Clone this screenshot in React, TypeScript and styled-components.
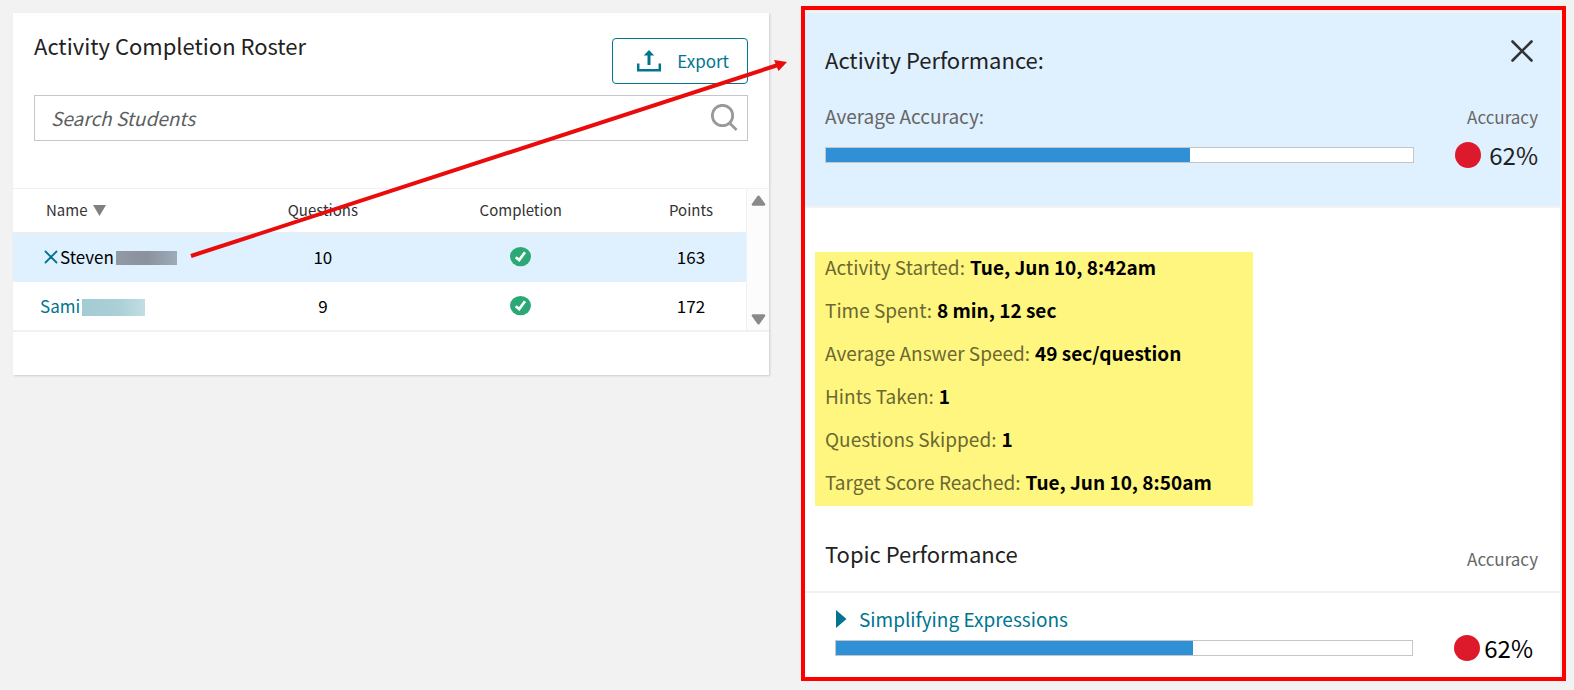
import React from "react";
import styled, { createGlobalStyle } from "styled-components";

const GlobalStyle = createGlobalStyle`
  *, *::before, *::after { box-sizing: border-box; }
  body {
    margin: 0;
    background: #f2f2f2;
    color: #222;
    font-family: "Noto Sans CJK SC", "Noto Sans", sans-serif;
    font-size: 16px;
    line-height: 24px;
  }
  button, input { font: inherit; color: inherit; }
  button { background: none; border: 0; padding: 0; cursor: pointer; }
  h2, dl, dd { margin: 0; font-weight: 400; }
  svg { display: block; flex: none; }
`;

const Page = styled.main`
  display: grid;
  grid-template-columns: 756fr 765fr;
  gap: 32px;
  align-items: start;
  padding: 6px 8px 9px 13px;
`;

const Title = styled.h2`
  font-size: 22px;
  line-height: 32px;
  color: #222;
`;

const RosterCard = styled.section`
  position: relative;
  margin-top: 7px;
  padding-bottom: 43px;
  background: #fff;
  box-shadow: 1px 1px 2px #ccc;
`;

const RosterHeader = styled.header`
  display: flex;
  justify-content: space-between;
  align-items: flex-start;
  padding: 16px 21px 0;

  button { margin-top: 9px; }
`;

const ExportButton = styled.button`
  display: flex;
  align-items: center;
  gap: 16px;
  height: 46px;
  padding: 0 18px 0 24px;
  border: 1px solid #00758f;
  border-radius: 4px;
  color: #00758f;
  font-size: 17px;
`;

const SearchBox = styled.label`
  display: flex;
  align-items: center;
  height: 46px;
  margin: 11px 21px 47px;
  padding: 0 9px 0 16px;
  border: 1px solid #c4c6c8;

  input {
    flex: 1;
    min-width: 0;
    padding: 0;
    border: 0;
    outline: 0;
    font-size: 19px;
    line-height: 28px;
    font-style: italic;
  }
  input::placeholder { color: #5c5f62; opacity: 1; }
`;

const RosterBody = styled.div`
  display: flex;
  border-top: 1px solid #f1f1f1;
  border-bottom: 2px solid #f1f1f1;
`;

const Table = styled.table`
  flex: 1;
  table-layout: fixed;
  border-collapse: collapse;

  th, td { padding: 0; text-align: center; font-weight: 400; }
  th:nth-child(2), td:nth-child(2), th:nth-child(3), td:nth-child(3) { padding-left: 4px; }
  th { height: 43px; font-size: 15px; color: #333; }
  td { height: 49px; color: #000; border-top: 1px solid #eee; font-size: 17px; }
  td svg { margin: 0 auto; }
`;

const Column = styled.col<{ $share: number }>`
  width: ${(p) => p.$share}%;
`;

const Row = styled.tr<{ $selected?: boolean }>`
  background: ${(p) => (p.$selected ? "#dff0ff" : "#fff")};
`;

const SortButton = styled.button`
  display: flex;
  align-items: center;
  gap: 5px;
  padding-left: 33px;
`;

const Student = styled.button<{ $selected?: boolean }>`
  display: flex;
  align-items: center;
  gap: 2px;
  padding-left: ${(p) => (p.$selected ? 31 : 27)}px;
  color: ${(p) => (p.$selected ? "#000" : "#00758f")};
`;

const Redaction = styled.span<{ $tone: "gray" | "teal" }>`
  width: ${(p) => (p.$tone === "gray" ? 61 : 63)}px;
  height: ${(p) => (p.$tone === "gray" ? 14 : 17)}px;
  margin-top: 3px;
  background: ${(p) =>
    p.$tone === "gray"
      ? "linear-gradient(90deg, #919aa5, #8a929c 50%, #9eabba)"
      : "linear-gradient(90deg, #a3cbd3, #abd0d7 60%, #c2dee4)"};
`;

const ScrollTrack = styled.div`
  display: flex;
  flex-direction: column;
  justify-content: space-between;
  align-items: center;
  width: 23px;
  padding: 6px 0 5px;
  border-left: 1px solid #f0f0f0;
  background: #fcfcfc;
`;

const ArrowOverlay = styled.svg`
  position: absolute;
  left: 177px;
  top: 41px;
  pointer-events: none;
`;

const Panel = styled.section`
  border: 4px solid #f00;
  padding: 3px 2px 0 0;
  background: linear-gradient(#f2f2f2, #f2f2f2) right / 2px 100% no-repeat, #fff;
`;

const Summary = styled.header`
  padding: 23px 22px 37px 20px;
  border-bottom: 2px solid #f2f2f2;
  background: #dff0ff;
  box-shadow: 0 -3px #f2f2f2;
`;

const Line = styled.div`
  display: flex;
  justify-content: space-between;
  align-items: center;
`;

const TitleLine = styled(Line)`
  align-items: flex-start;
  padding-right: 5px;

  h2 { margin-top: 7px; }
  button { margin-top: 4px; }
`;

const LabelLine = styled(Line)`
  align-items: baseline;
  margin: 27px 0 10px;
`;

const Muted = styled.span<{ $small?: boolean }>`
  color: #666;
  font-size: ${(p) => (p.$small ? 17 : 19)}px;
  line-height: 28px;
`;

const MeterLine = styled.div`
  display: flex;
  align-items: center;
  gap: 41px;
`;

const Meter = styled.div`
  flex: 1;
  height: 16px;
  border: 1px solid #c4c6c8;
  background: #fff;
`;

const MeterFill = styled.div`
  height: 100%;
  background: #2f90d5;
`;

const Score = styled.div<{ $gap: number; $color: string }>`
  display: flex;
  align-items: center;
  gap: ${(p) => p.$gap}px;
  color: ${(p) => p.$color};
  font-size: 24px;
  line-height: 28px;

  &::before {
    content: "";
    width: 26px;
    height: 26px;
    border-radius: 50%;
    background: #dc1a2b;
  }
`;

const Facts = styled.dl`
  display: flex;
  flex-direction: column;
  gap: 15px;
  width: 58%;
  margin: 44px 0 0 10px;
  padding: 1px 10px 10px;
  background: #fff680;
`;

const Fact = styled.div`
  display: flex;
  gap: 5px;
  font-size: 19px;
  line-height: 28px;
  white-space: nowrap;

  dt { color: #6b6832; }
  dd { color: #000; font-weight: 700; }
`;

const TopicHeader = styled(Line)`
  padding: 26px 22px 18px 20px;
  border-bottom: 2px solid #f2f2f2;

  span { margin-top: 13px; }
`;

const Topic = styled.div`
  display: flex;
  flex-direction: column;
  gap: 1px;
  padding: 12px 27px 15px 30px;
`;

const TopicButton = styled.button`
  display: flex;
  align-items: center;
  align-self: flex-start;
  gap: 12px;
  padding-left: 1px;
  color: #00758f;
  font-size: 19px;
  line-height: 28px;
`;

const Accuracy = ({ value, label, gap, color }: { value: number; label: string; gap: number; color: string }) => (
  <MeterLine>
    <Meter role="meter" aria-label={label} aria-valuenow={value} aria-valuemin={0} aria-valuemax={100}>
      <MeterFill style={{ width: `${value}%` }} />
    </Meter>
    <Score $gap={gap} $color={color}>{value}%</Score>
  </MeterLine>
);

const Cross = ({ size, color, stroke }: { size: number; color: string; stroke: number }) => (
  <svg width={size} height={size} viewBox={`0 0 ${size} ${size}`} aria-hidden="true">
    <path
      d={`M1.5 1.5L${size - 1.5} ${size - 1.5}M${size - 1.5} 1.5L1.5 ${size - 1.5}`}
      stroke={color}
      strokeWidth={stroke}
      strokeLinecap="round"
    />
  </svg>
);

const Check = () => (
  <svg width="21" height="20" viewBox="0 0 21 20" role="img" aria-label="Complete">
    <ellipse cx="10.5" cy="9.6" rx="10.5" ry="9.6" fill="#2aa876" />
    <path d="M5.7 10.2L9.2 13L15 5.2" fill="none" stroke="#fff" strokeWidth="2.7" />
  </svg>
);

const ScrollMark = ({ down }: { down?: boolean }) => (
  <svg width="15" height="11" viewBox="0 0 15 11" aria-hidden="true">
    <path
      d={down ? "M2 1.5H13L7.5 9.2Z" : "M2 9.5H13L7.5 1.8Z"}
      fill="#8a8a8a"
      stroke="#8a8a8a"
      strokeWidth="2.6"
      strokeLinejoin="round"
    />
  </svg>
);

const students = [
  { name: "Steven", selected: true, tone: "gray" as const, questions: 10, points: 163 },
  { name: "Sami", selected: false, tone: "teal" as const, questions: 9, points: 172 },
];

const facts = [
  ["Activity Started:", "Tue, Jun 10, 8:42am"],
  ["Time Spent:", "8 min, 12 sec"],
  ["Average Answer Speed:", "49 sec/question"],
  ["Hints Taken:", "1"],
  ["Questions Skipped:", "1"],
  ["Target Score Reached:", "Tue, Jun 10, 8:50am"],
];

export default function App() {
  return (
    <>
      <GlobalStyle />
      <Page>
        <RosterCard>
          <RosterHeader>
            <Title>Activity Completion Roster</Title>
            <ExportButton type="button">
              <svg width="24" height="22" viewBox="0 0 24 22" aria-hidden="true">
                <path d="M1.2 13.5V20.2H22.8V13.5" fill="none" stroke="#00758f" strokeWidth="2.5" />
                <path d="M12 15V3" stroke="#00758f" strokeWidth="3" />
                <path d="M6.8 5.6L12 0L17.2 5.6Z" fill="#00758f" />
              </svg>
              Export
            </ExportButton>
          </RosterHeader>
          <SearchBox>
            <input type="text" placeholder="Search Students" aria-label="Search Students" />
            <svg width="27" height="28" viewBox="0 0 27 28" aria-hidden="true">
              <circle cx="11.5" cy="11.5" r="10.2" fill="none" stroke="#999" strokeWidth="2.8" />
              <path d="M18.6 19L25.6 26" stroke="#999" strokeWidth="2.8" />
            </svg>
          </SearchBox>
          <RosterBody>
            <Table>
              <colgroup>
                <Column $share={31} />
                <Column $share={22} />
                <Column $share={32} />
                <Column $share={15} />
              </colgroup>
              <thead>
                <tr>
                  <th scope="col">
                    <SortButton type="button">
                      Name
                      <svg width="13" height="11" viewBox="0 0 13 11" aria-hidden="true">
                        <path d="M0 0H13L6.5 11Z" fill="#808080" />
                      </svg>
                    </SortButton>
                  </th>
                  <th scope="col">Questions</th>
                  <th scope="col">Completion</th>
                  <th scope="col">Points</th>
                </tr>
              </thead>
              <tbody>
                {students.map((s) => (
                  <Row key={s.name} $selected={s.selected}>
                    <td>
                      <Student type="button" $selected={s.selected}>
                        {s.selected && <Cross size={14} color="#00758f" stroke={1.8} />}
                        {s.name}
                        <Redaction $tone={s.tone} />
                      </Student>
                    </td>
                    <td>{s.questions}</td>
                    <td><Check /></td>
                    <td>{s.points}</td>
                  </Row>
                ))}
              </tbody>
            </Table>
            <ScrollTrack>
              <ScrollMark />
              <ScrollMark down />
            </ScrollTrack>
          </RosterBody>
          <ArrowOverlay width="600" height="206" viewBox="0 0 600 206" aria-hidden="true">
            <path d="M1 202L588 11" stroke="#ea0b0b" strokeWidth="4" />
            <path d="M584 6L597 8L588.5 17Z" fill="#ea0b0b" />
          </ArrowOverlay>
        </RosterCard>

        <Panel>
          <Summary>
            <TitleLine>
              <Title>Activity Performance:</Title>
              <button type="button" aria-label="Close">
                <Cross size={22} color="#333" stroke={2.6} />
              </button>
            </TitleLine>
            <LabelLine>
              <Muted>Average Accuracy:</Muted>
              <Muted $small>Accuracy</Muted>
            </LabelLine>
            <Accuracy value={62} label="Average accuracy" gap={8} color="#222" />
          </Summary>
          <Facts>
            {facts.map(([term, value]) => (
              <Fact key={term}>
                <dt>{term}</dt>
                <dd>{value}</dd>
              </Fact>
            ))}
          </Facts>
          <TopicHeader>
            <Title>Topic Performance</Title>
            <Muted $small>Accuracy</Muted>
          </TopicHeader>
          <Topic>
            <TopicButton type="button" aria-expanded="false">
              <svg width="11" height="18" viewBox="0 0 11 18" aria-hidden="true">
                <path d="M0 0L10.5 9L0 18Z" fill="#00758f" />
              </svg>
              Simplifying Expressions
            </TopicButton>
            <Accuracy value={62} label="Simplifying Expressions accuracy" gap={4} color="#000" />
          </Topic>
        </Panel>
      </Page>
    </>
  );
}
